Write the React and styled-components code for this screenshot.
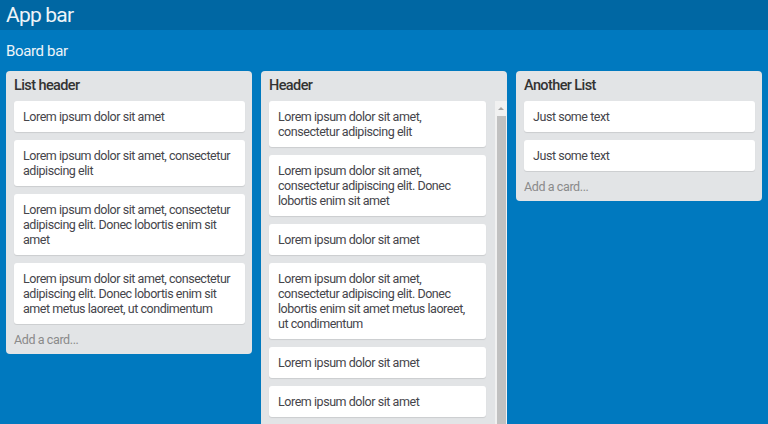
import React from 'react'
import styled, { createGlobalStyle } from 'styled-components'

const GlobalStyle = createGlobalStyle`
  html, body {
    margin: 0;
    padding: 0;
    overflow: hidden;
  }
  body {
    font-family: Roboto, "Liberation Sans", sans-serif;
  }
`

const Ui = styled.div`
  height: 100vh;
  display: grid;
  grid-template-rows: 30px 41px 1fr;
  background-color: #0079bf;
  color: #333;
`

const AppBar = styled.div`
  background-color: #0067a3;
  color: #eef4f8;
  font-size: 21px;
  letter-spacing: -0.8px;
  line-height: 30px;
  padding: 0 6px;
`

const BoardBar = styled.div`
  color: #eef4f8;
  font-size: 15px;
  letter-spacing: -0.35px;
  line-height: 42px;
  padding: 0 6px;
`

const Lists = styled.div`
  display: flex;
  align-items: flex-start;
  gap: 9px;
  padding: 0 6px;
  min-height: 0;
`

const List = styled.div`
  flex: 0 0 246px;
  display: flex;
  flex-direction: column;
  background-color: #e2e4e6;
  border-radius: 4px;
`

const ListHeader = styled.header`
  line-height: 30px;
  padding: 0 8px;
  font-size: 14.5px;
  letter-spacing: -0.6px;
  font-weight: 500;
  color: #333;
`

const ListBody = styled.div`
  display: flex;
  gap: 9px;
  height: ${p => (p.$scroll ? '380px' : 'auto')};
  overflow: hidden;
  padding-left: 8px;
  padding-right: ${p => (p.$scroll ? '0' : '7px')};
`

const Cards = styled.ul`
  flex: 1;
  list-style: none;
  margin: 0;
  padding: 0 0 1px;
  display: flex;
  flex-direction: column;
  gap: 8px;
`

const Card = styled.li`
  background-color: #fff;
  border-radius: 3px;
  padding: 8px 9px;
  font-size: 12.5px;
  letter-spacing: -0.45px;
  line-height: 15px;
  color: #45454b;
  box-shadow: 0 1px 1px rgba(0, 0, 0, 0.1);
`

const ListFooter = styled.footer`
  line-height: 29px;
  padding: 0 8px;
  font-size: 12.5px;
  letter-spacing: -0.4px;
  color: #8a8a8a;
`

const Rail = styled.div`
  flex: 0 0 12px;
  display: flex;
  flex-direction: column;
  background-color: #f1f1f1;
`

const RailArrow = styled.div`
  height: 15px;
  display: flex;
  align-items: center;
  justify-content: center;

  &::before {
    content: '';
    border-left: 3px solid transparent;
    border-right: 3px solid transparent;
    border-bottom: 3px solid #a3a3a3;
  }
`

const Thumb = styled.div`
  flex: 1;
  margin: 0 1.5px 20px;
  background-color: #c1c1c1;
`

const short = 'Lorem ipsum dolor sit amet'
const two = 'Lorem ipsum dolor sit amet, consectetur adipiscing elit'
const three = 'Lorem ipsum dolor sit amet, consectetur adipiscing elit. Donec lobortis enim sit amet'
const four = 'Lorem ipsum dolor sit amet, consectetur adipiscing elit. Donec lobortis enim sit amet metus laoreet, ut condimentum'

const lists = [
    { title: 'List header', cards: [short, two, three, four] },
    { title: 'Header', scroll: true, cards: [two, three, short, four, short, short] },
    { title: 'Another List', cards: ['Just some text', 'Just some text'] },
]

function BoardList({ list }) {
    return (
        <List>
            <ListHeader>{list.title}</ListHeader>
            <ListBody $scroll={list.scroll}>
                <Cards>
                    {list.cards.map((text, i) => <Card key={i}>{text}</Card>)}
                </Cards>
                {list.scroll ? (
                    <Rail>
                        <RailArrow />
                        <Thumb />
                    </Rail>
                ) : null}
            </ListBody>
            {!list.scroll ? <ListFooter>Add a card...</ListFooter> : null}
        </List>
    )
}

export default function App() {
    return (
        <>
            <GlobalStyle />
            <Ui>
                <AppBar>App bar</AppBar>
                <BoardBar>Board bar</BoardBar>
                <Lists>
                    {lists.map((list, i) => <BoardList key={i} list={list} />)}
                </Lists>
            </Ui>
        </>
    )
}
